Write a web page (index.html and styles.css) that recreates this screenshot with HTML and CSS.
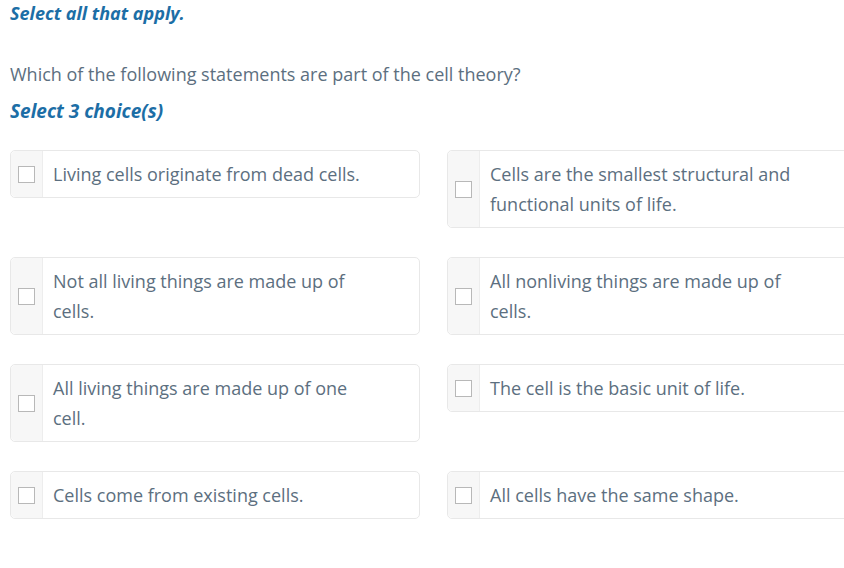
FILE: index.html
```html
<!DOCTYPE html>
<html lang="en">
<head>
    <meta charset="UTF-8">
    <meta name="viewport" content="width=device-width, initial-scale=1.0">
    <title>Cell theory - question</title>
    <link rel="stylesheet" href="styles.css">
</head>
<body>
    <h2 class="instruction">Select all that apply.</h2>

    <p class="question">Which of the following statements are part of the cell theory?</p>
    <p class="choice-count">Select 3 choice(s)</p>

    <div class="choices">
        <label class="choice">
            <span class="choice-box"><input type="checkbox"></span>
            <span class="choice-text">Living cells originate from dead cells.</span>
        </label>
        <label class="choice">
            <span class="choice-box"><input type="checkbox"></span>
            <span class="choice-text">Cells are the smallest structural and functional units of life.</span>
        </label>
        <label class="choice">
            <span class="choice-box"><input type="checkbox"></span>
            <span class="choice-text">Not all living things are made up of cells.</span>
        </label>
        <label class="choice">
            <span class="choice-box"><input type="checkbox"></span>
            <span class="choice-text">All nonliving things are made up of cells.</span>
        </label>
        <label class="choice">
            <span class="choice-box"><input type="checkbox"></span>
            <span class="choice-text">All living things are made up of one cell.</span>
        </label>
        <label class="choice">
            <span class="choice-box"><input type="checkbox"></span>
            <span class="choice-text">The cell is the basic unit of life.</span>
        </label>
        <label class="choice">
            <span class="choice-box"><input type="checkbox"></span>
            <span class="choice-text">Cells come from existing cells.</span>
        </label>
        <label class="choice">
            <span class="choice-box"><input type="checkbox"></span>
            <span class="choice-text">All cells have the same shape.</span>
        </label>
    </div>
</body>
</html>
```

FILE: styles.css
```css
body {
    font-family: "Open Sans", Arial, sans-serif;
    margin: 0;
    padding: 0 10px;
    background-color: #fff;
    color: #5c6f80;
    width: 848px;
}

.instruction {
    margin: 0;
    font-size: 18px;
    line-height: 26px;
    font-weight: bold;
    font-style: italic;
    color: #1c6ea6;
}

.question {
    margin: 35px 0 0;
    font-size: 18px;
    line-height: 26px;
}

.choice-count {
    margin: 11px 0 0;
    font-size: 19px;
    line-height: 26px;
    font-weight: bold;
    font-style: italic;
    color: #1c6ea6;
}

.choices {
    margin-top: 26px;
    display: grid;
    grid-template-columns: 410px 410px;
    column-gap: 27px;
    row-gap: 29px;
    align-items: start;
}

.choice {
    display: flex;
    border: 1px solid #e8e8e8;
    border-radius: 5px;
    background-color: #fff;
    cursor: pointer;
}

.choice-box {
    width: 31px;
    flex-shrink: 0;
    display: flex;
    align-items: center;
    justify-content: center;
    background-color: #f7f7f7;
    border-right: 1px solid #ededed;
    border-radius: 5px 0 0 5px;
}

.choice-box input {
    appearance: none;
    margin: 0;
    width: 17px;
    height: 17px;
    border: 1px solid #b8b8b8;
    background-color: #fff;
}

.choice-text {
    padding: 8px 40px 8px 10px;
    font-size: 18px;
    line-height: 30px;
}
```
